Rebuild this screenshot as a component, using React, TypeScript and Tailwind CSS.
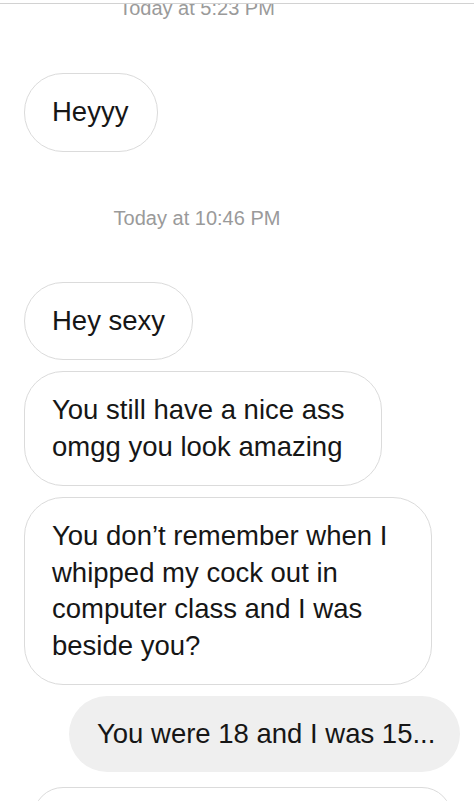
import React from "react";

type Bubble = { lines: string[]; width: string };

const received: Bubble[] = [
  { lines: ["Hey sexy"], width: "w-[169px]" },
  { lines: ["You still have a nice ass", "omgg you look amazing"], width: "w-[358px]" },
  {
    lines: [
      "You don\u2019t remember when I",
      "whipped my cock out in",
      "computer class and I was",
      "beside you?",
    ],
    width: "w-[408px]",
  },
];

function Stamp({ text, className = "" }: { text: string; className?: string }) {
  return (
    <div className={"w-[394px] text-center text-[20px] leading-[20px] text-[#9a9a9a] " + className}>
      {text}
    </div>
  );
}

function Received({ lines, width, className = "" }: Bubble & { className?: string }) {
  return (
    <div
      className={
        "ml-6 rounded-[39px] border border-[#dbdbdb] bg-white px-[27px] py-[20px] text-[27.5px] leading-[36.5px] text-[#161616] " +
        width +
        " " +
        className
      }
    >
      {lines.map((l, i) => (
        <div key={i} className="whitespace-nowrap">
          {l}
        </div>
      ))}
    </div>
  );
}

export default function App() {
  return (
    <div
      className="relative h-[801px] w-[474px] overflow-hidden bg-white"
      style={{ fontFamily: '"Liberation Sans", Arial, sans-serif' }}
    >
      {/* top edge of the crop */}
      <div className="absolute left-0 top-0 z-10 h-[4px] w-full border-b border-[#d2d2d2] bg-white" />

      <div className="flex flex-col">
        <Stamp text="Today at 5:23 PM" className="-mt-[2px]" />

        <Received lines={["Heyyy"]} width="w-[134px]" className="mt-[55px]" />

        <Stamp text="Today at 10:46 PM" className="mt-[56px]" />

        <div className="mt-[54px] flex flex-col gap-[11px]">
          {received.map((b, i) => (
            <Received key={i} {...b} />
          ))}

          <div className="flex justify-end pr-[14px]">
            <div className="w-[391px] whitespace-nowrap rounded-[38px] bg-[#efefef] px-[28px] py-[20px] text-[27.5px] leading-[36px] text-[#161616]">
              You were 18 and I was 15...
            </div>
          </div>
        </div>

        <div className="ml-[33px] mt-[15px] h-[60px] w-[419px] rounded-[38px] border border-[#dbdbdb] bg-white" />
      </div>
    </div>
  );
}
